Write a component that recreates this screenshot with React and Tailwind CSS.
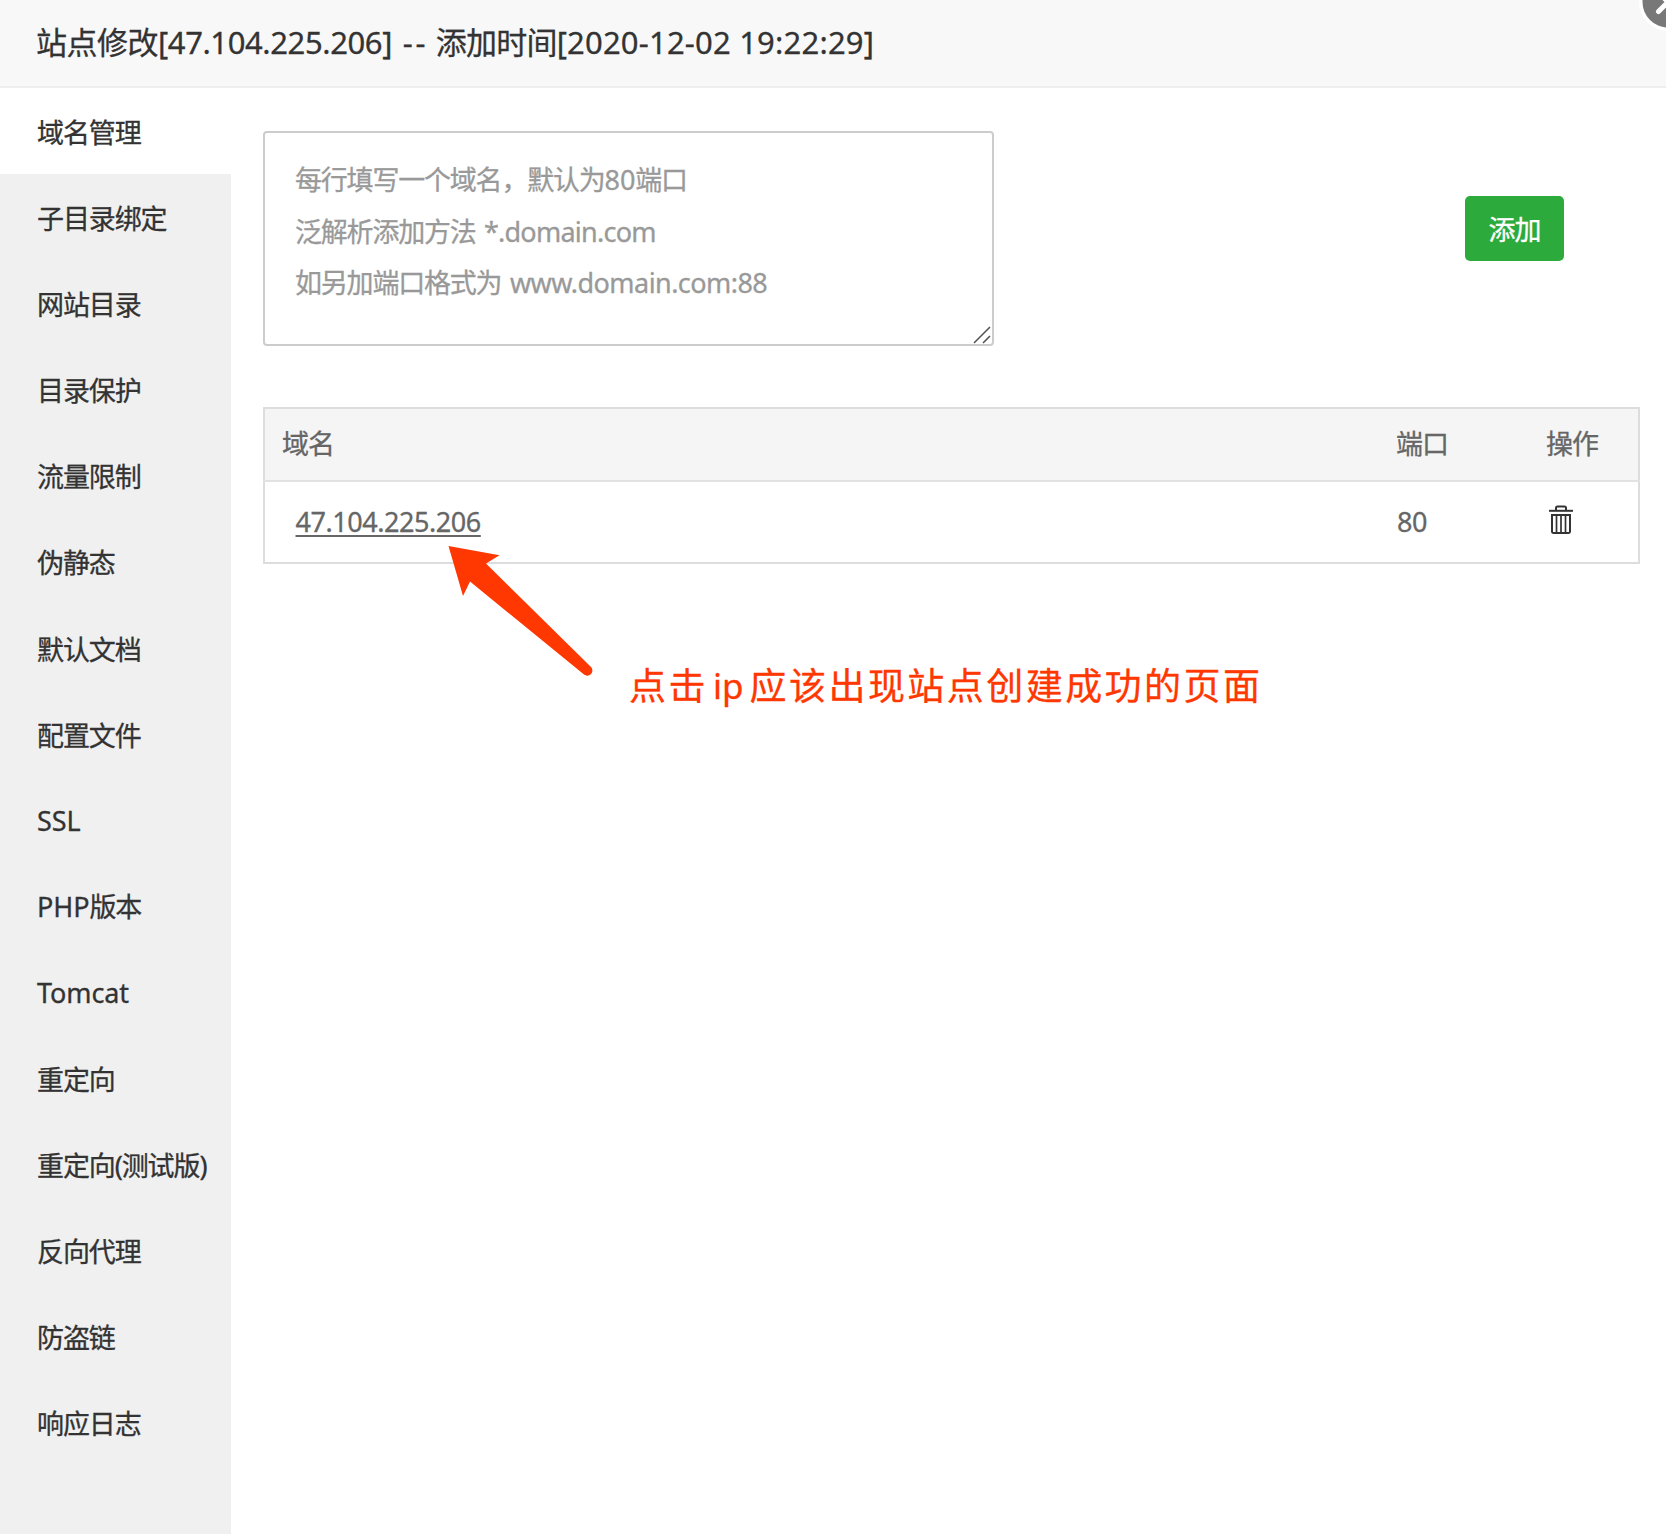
import React, { useState } from "react";

const menus = [
    "域名管理",
    "子目录绑定",
    "网站目录",
    "目录保护",
    "流量限制",
    "伪静态",
    "默认文档",
    "配置文件",
    "SSL",
    "PHP版本",
    "Tomcat",
    "重定向",
    "重定向(测试版)",
    "反向代理",
    "防盗链",
    "响应日志",
];

const domains = [{ name: "47.104.225.206", port: "80" }];

function TrashIcon() {
    return (
        <svg className="-mt-[5px]" width="24" height="29" viewBox="0 0 24 29" fill="none" stroke="#333" strokeWidth="2">
            <path d="M0 5.800h24" />
            <path d="M7 5.500V3a1.500 1.500 0 0 1 1.500-1.500h7A1.500 1.500 0 0 1 17 3v2.500" />
            <path d="M3 10h18v16.500a1.500 1.500 0 0 1-1.500 1.500h-15A1.500 1.500 0 0 1 3 26.500z" />
            <path d="M7.500 10v17.500M12 10v17.500M16.500 10v17.500" strokeWidth="1.700" />
        </svg>
    );
}

function CloseButton() {
    return (
        <button className="absolute -top-[27px] right-[-31px] h-[58px] w-[58px]">
            <svg width="58" height="58" viewBox="0 0 58 58">
                <circle cx="29" cy="29" r="29" fill="#fff" />
                <circle cx="29" cy="29" r="25.500" fill="#787878" />
                <path d="M19.500 19.500l19 19M38.500 19.500L19.500 38.500" stroke="#fff" strokeWidth="5" strokeLinecap="round" />
            </svg>
        </button>
    );
}

function App() {
    const [active, setActive] = useState(0);

    return (
        <div className="relative flex h-[1534px] w-[1666px] flex-col overflow-hidden bg-white font-['Noto_Sans','Noto_Sans_CJK_SC',sans-serif] text-[27px] text-[#333] [-webkit-text-stroke:0.3px]">
            <div className="h-[88px] shrink-0 border-b-2 border-[#eee] bg-[#f8f8f8] pl-[36px] text-[31px] leading-[84px] whitespace-pre">
                <span className="tracking-[-0.5px]">站点修改</span>
                <span className="tracking-[-0.4px]">[47.104.225.206] </span>
                <span className="ml-[3px] tracking-[3px]">--</span>
                <span className="tracking-[-0.800px]"> 添加时间</span>
                <span className="tracking-[0.200px]">[2020-12-02 19:22:29]</span>
            </div>
            <CloseButton />

            <div className="flex flex-1">
                <div className="w-[231px] shrink-0 bg-[#f0f0f0]">
                    {menus.map((item, i) => (
                        <p
                            key={item}
                            onClick={() => setActive(i)}
                            className={`h-[86.100px] cursor-pointer pl-[37px] whitespace-nowrap ${
                                /^[A-Z]/.test(item) ? "leading-[87px] tracking-[-0.100px]" : "leading-[89px] tracking-[-1.100px]"
                            } ${i === active ? "bg-white" : ""}`}
                        >
                            {item.startsWith("PHP") ? (
                                <>
                                    PHP<span className="tracking-[-1.100px]">{item.slice(3)}</span>
                                </>
                            ) : (
                                item
                            )}
                        </p>
                    ))}
                </div>

                <div className="flex-1 pt-[43px] pr-[26px] pl-8">
                    <div className="flex items-start justify-between pr-[76px]">
                        <div className="relative h-[215px] w-[731px] rounded-[4px] border-2 border-[#ccc] pt-[21px] pl-[30px] leading-[51.700px] text-[#999] whitespace-pre">
                            <p className="tracking-[-1.200px]">
                                每行填写一个域名，默认为<span className="tracking-[-0.100px]">80</span>端口
                            </p>
                            <p>
                                <span className="tracking-[-1.200px]">泛解析添加方法</span>
                                <span className="ml-[2px] tracking-[-0.750px]"> *.domain.com</span>
                            </p>
                            <p>
                                <span className="tracking-[-1.200px]">如另加端口格式为</span>
                                <span className="ml-[2px] tracking-[-0.550px]"> www.domain.com:88</span>
                            </p>
                            <svg className="absolute right-px bottom-0" width="18" height="18" viewBox="0 0 18 18" stroke="#555" strokeWidth="1.600">
                                <path d="M1 17L17 1M10 17l7-7" />
                            </svg>
                        </div>
                        <button className="mt-[64.500px] h-[65px] w-[99px] rounded-[5px] bg-[#2caa3c] pt-[4px] tracking-[-1.100px] text-white">
                            添加
                        </button>
                    </div>

                    <table className="mt-[61px] w-full table-fixed border-collapse border-2 border-[#ddd] text-left text-[#666]">
                        <thead>
                            <tr className="h-[73px] border-b-2 border-[#e2e2e2] bg-[#f5f5f5] tracking-[-1.100px]">
                                <th className="pl-[17px] font-normal">域名</th>
                                <th className="w-[150px] pl-[5px] font-normal">端口</th>
                                <th className="w-[98px] pl-[5px] font-normal">操作</th>
                            </tr>
                        </thead>
                        <tbody>
                            {domains.map((d) => (
                                <tr key={d.name} className="h-[82px]">
                                    <td className="pl-[30.500px]">
                                        <a className="tracking-[-0.450px] underline decoration-2 underline-offset-[3px]">{d.name}</a>
                                    </td>
                                    <td className="pl-[6px] tracking-[-0.450px]">{d.port}</td>
                                    <td className="pl-[8px]">
                                        <TrashIcon />
                                    </td>
                                </tr>
                            ))}
                        </tbody>
                    </table>
                </div>
            </div>

            {/* annotation over the page */}
            <svg className="absolute top-[540px] left-[440px]" width="160" height="140" viewBox="440 540 160 140">
                <path
                    d="M448.500 546L499.500 555.300L486 563.500L590.500 666.500A4.800 4.800 0 0 1 584 674.500L470 581.500L463 596Z"
                    fill="#ff3700"
                />
            </svg>
            <div className="absolute top-[656px] left-[629px] flex text-[37px] leading-[60px] whitespace-nowrap text-[#ff3700]">
                <span className="tracking-[2.500px]">点击</span>
                <span className="pr-[6px] pl-[5px] text-[35px]">ip</span>
                <span className="tracking-[2.450px]">应该出现站点创建成功的页面</span>
            </div>
        </div>
    );
}

export default App;
